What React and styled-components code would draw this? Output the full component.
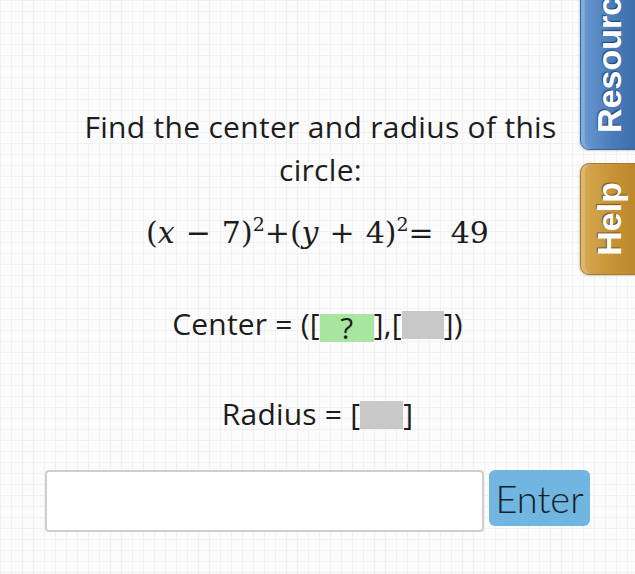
import React from 'react';
import styled, { createGlobalStyle } from 'styled-components';

const GlobalStyle = createGlobalStyle`
  html, body {
    margin: 0;
    padding: 0;
  }
  body {
    width: 635px;
    height: 574px;
    overflow: hidden;
    background-color: #fcfcfd;
    background-image:
      linear-gradient(to right, #f1f1f4 1px, transparent 1px),
      linear-gradient(to bottom, #f1f1f4 1px, transparent 1px);
    background-size: 11px 11px;
  }
`;

const Page = styled.div`
  position: relative;
  width: 635px;
  height: 574px;
  display: flex;
  flex-direction: column;
  align-items: center;
  padding-top: 105px;
  box-sizing: border-box;
  font-family: "Open Sans", Lato, sans-serif;
  color: #1c1c1c;
`;

const Question = styled.div`
  width: 635px;
  padding-left: 6px;
  box-sizing: border-box;
  text-align: center;
  font-size: 30px;
  letter-spacing: 0.3px;
  line-height: 43px;
`;

const Equation = styled.div`
  margin-top: 22px;
  width: 635px;
  text-align: center;
  font-family: "DejaVu Serif", "Liberation Serif", serif;
  font-size: 30px;
  line-height: 40px;
  white-space: nowrap;
`;

const Var = styled.i`
  font-style: italic;
`;

const Op = styled.span`
  margin-left: ${p => p.$l || 0}px;
  margin-right: ${p => p.$r || 0}px;
`;

const Sup = styled.sup`
  font-size: 19px;
  line-height: 0;
  vertical-align: 12px;
`;

const AnswerLine = styled.div`
  width: 635px;
  text-align: center;
  font-size: 30px;
  letter-spacing: 0.2px;
  line-height: 40px;
  margin-top: ${p => p.$gap}px;
`;

const Blank = styled.span`
  display: inline-block;
  width: ${p => p.$w}px;
  height: 28px;
  line-height: 28px;
  vertical-align: -4px;
  text-align: center;
  background: ${p => (p.$active ? '#a8e6a0' : '#c8c8c8')};
  color: #1c1c1c;
`;

const AnswerRow = styled.div`
  width: 635px;
  display: flex;
  align-items: flex-start;
  gap: 5px;
  padding-left: 45px;
  box-sizing: border-box;
  margin-top: 36px;
`;

const Input = styled.input`
  width: 439px;
  height: 62px;
  box-sizing: border-box;
  border: 2px solid #cfcfcf;
  border-radius: 4px;
  background: #fff;
  outline: none;
`;

const EnterButton = styled.button`
  width: 101px;
  height: 56px;
  border: none;
  border-radius: 6px;
  background: #70b6e1;
  color: #14202c;
  font-family: Lato, "Open Sans", sans-serif;
  font-weight: 300;
  font-size: 38px;
  padding: 0;
  line-height: 56px;
`;

const Tab = styled.div`
  position: absolute;
  right: -8px;
  top: ${p => p.$top}px;
  height: ${p => p.$h}px;
  width: 63px;
  box-sizing: border-box;
  border-radius: 9px 0 0 9px;
  background: ${p => p.$bg};
  border: 1px solid ${p => p.$edge};
  box-shadow: inset 4px 0 0 rgba(255, 255, 255, 0.18), -1px 1px 2px rgba(0, 0, 0, 0.15);
  display: flex;
  align-items: ${p => (p.$end ? 'flex-end' : 'center')};
  justify-content: center;
  overflow: hidden;
`;

const TabLabel = styled.span`
  writing-mode: vertical-rl;
  transform: rotate(180deg);
  font-family: "Liberation Sans", Arial, sans-serif;
  font-weight: bold;
  font-size: 34px;
  line-height: 1;
  color: #fff;
  text-shadow: 1px -1px 1px rgba(0, 0, 0, 0.45);
  margin-right: 6px;
  padding-top: ${p => p.$pad || 0}px;
  white-space: nowrap;
`;

export default function App() {
  return (
    <>
      <GlobalStyle />
      <Page>
        <Question>
          Find the center and radius of this
          <br />
          circle:
        </Question>
        <Equation>
          (<Var>x</Var>
          <Op $l={11} $r={11}>−</Op>7)<Sup>2</Sup>+(<Var>y</Var>
          <Op $l={11} $r={11}>+</Op>4)<Sup>2</Sup>
          <Op $r={17}>=</Op>49
        </Equation>
        <AnswerLine $gap={51}>
          Center = ([<Blank $w={54} $active>?</Blank>],[<Blank $w={42} />])
        </AnswerLine>
        <AnswerLine $gap={50}>
          Radius = [<Blank $w={43} />]
        </AnswerLine>
        <AnswerRow>
          <Input type="text" />
          <EnterButton>Enter</EnterButton>
        </AnswerRow>

        <Tab $top={-60} $h={210} $bg="linear-gradient(to right, #6c9bd0, #4a7cbb 50%, #3c6aa8)" $edge="#3a6399" $end>
          <TabLabel $pad={16}>Resources</TabLabel>
        </Tab>
        <Tab $top={163} $h={112} $bg="linear-gradient(to right, #d7a955, #c89436 50%, #b98428)" $edge="#a87a2a">
          <TabLabel>Help</TabLabel>
        </Tab>
      </Page>
    </>
  );
}
